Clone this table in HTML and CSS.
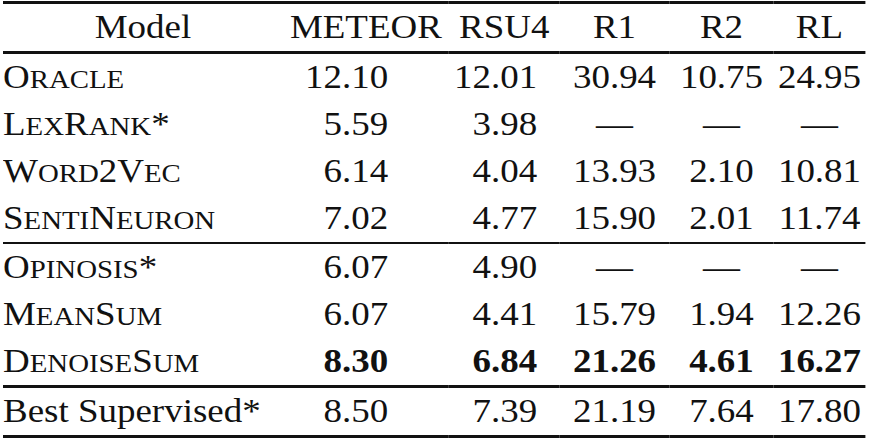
FILE: index.html
```html
<!DOCTYPE html>
<html lang="en">

<head>
  <meta charset="UTF-8" />
  <title>Results</title>
  <link rel="stylesheet" href="styles.css">
</head>

<body>
  <div class="table-wrap">
    <table class="results">
      <colgroup>
        <col class="c-model">
        <col class="c-meteor">
        <col class="c-rsu">
        <col class="c-r1">
        <col class="c-r2">
        <col class="c-rl">
      </colgroup>
      <thead>
        <tr>
          <th>Model</th>
          <th>METEOR</th>
          <th>RSU4</th>
          <th>R1</th>
          <th>R2</th>
          <th>RL</th>
        </tr>
      </thead>
      <tbody>
        <tr>
          <td>O<span class="sc">racle</span></td>
          <td class="meteor">12.10</td>
          <td class="rsu">12.01</td>
          <td>30.94</td>
          <td>10.75</td>
          <td>24.95</td>
        </tr>
        <tr>
          <td>L<span class="sc">ex</span>R<span class="sc">ank</span>*</td>
          <td class="meteor">5.59</td>
          <td class="rsu">3.98</td>
          <td>&mdash;</td>
          <td>&mdash;</td>
          <td>&mdash;</td>
        </tr>
        <tr>
          <td>W<span class="sc">ord</span>2V<span class="sc">ec</span></td>
          <td class="meteor">6.14</td>
          <td class="rsu">4.04</td>
          <td>13.93</td>
          <td>2.10</td>
          <td>10.81</td>
        </tr>
        <tr class="group-end">
          <td>S<span class="sc">enti</span>N<span class="sc">euron</span></td>
          <td class="meteor">7.02</td>
          <td class="rsu">4.77</td>
          <td>15.90</td>
          <td>2.01</td>
          <td>11.74</td>
        </tr>
        <tr>
          <td>O<span class="sc">pinosis</span>*</td>
          <td class="meteor">6.07</td>
          <td class="rsu">4.90</td>
          <td>&mdash;</td>
          <td>&mdash;</td>
          <td>&mdash;</td>
        </tr>
        <tr>
          <td>M<span class="sc">ean</span>S<span class="sc">um</span></td>
          <td class="meteor">6.07</td>
          <td class="rsu">4.41</td>
          <td>15.79</td>
          <td>1.94</td>
          <td>12.26</td>
        </tr>
        <tr class="best">
          <td>D<span class="sc">enoise</span>S<span class="sc">um</span></td>
          <td class="meteor"><b>8.30</b></td>
          <td class="rsu"><b>6.84</b></td>
          <td><b>21.26</b></td>
          <td><b>4.61</b></td>
          <td><b>16.27</b></td>
        </tr>
        <tr>
          <td>Best Supervised*</td>
          <td class="meteor">8.50</td>
          <td class="rsu">7.39</td>
          <td>21.19</td>
          <td>7.64</td>
          <td>17.80</td>
        </tr>
      </tbody>
    </table>
  </div>
</body>

</html>
```

FILE: styles.css
```css
* {
  box-sizing: border-box;
}

body {
  margin: 0;
  background: #fff;
  color: #111;
  font-family: "Liberation Serif", "Times New Roman", serif;
  font-size: 33px;
}

/* the source table is a bit wider than tall, so stretch it sideways */
.table-wrap {
  width: 770px;
  margin: 1px 0 0 3px;
  transform: scaleX(1.12);
  transform-origin: 0 0;
}

.results {
  width: 770px;
  table-layout: fixed;
  border-collapse: collapse;
  border-top: 3px solid #111;
  border-bottom: 3px solid #111;
}

.c-model { width: 250px; }
.c-meteor { width: 148px; }
.c-rsu { width: 99px; }
.c-r1 { width: 98px; }
.c-r2 { width: 93px; }
.c-rl { width: 82px; }

.results th,
.results td {
  padding: 0;
  height: 47px;
  line-height: 47px;
  text-align: center;
  font-weight: normal;
  white-space: nowrap;
}

.results thead tr {
  border-bottom: 3px solid #111;
}

.results td:first-child {
  text-align: left;
}

.results td.meteor {
  text-align: right;
  padding-right: 54px;
}

.results td.rsu {
  text-align: right;
  padding-right: 20px;
}

.results tr.group-end {
  border-bottom: 2px solid #111;
}

.results tr.best {
  border-bottom: 3px solid #111;
}

/* small caps, a bit taller than the browser's fake ones */
.sc {
  text-transform: uppercase;
  font-size: 0.78em;
  line-height: 0;
}
```
